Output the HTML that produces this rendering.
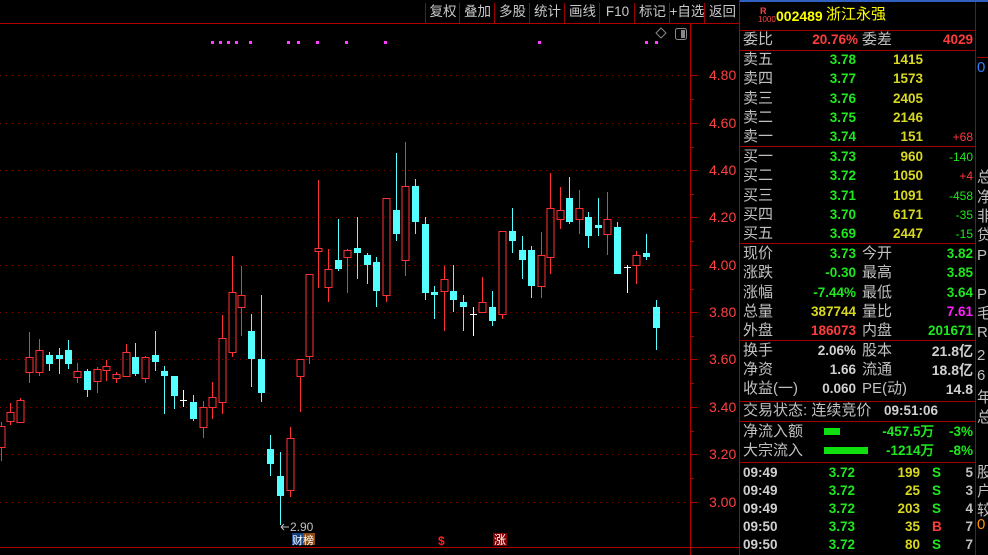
<!DOCTYPE html>
<html><head><meta charset="utf-8">
<style>
html,body{margin:0;padding:0;background:#000;width:988px;height:555px;overflow:hidden;position:relative;font-family:"Liberation Sans","Noto Sans CJK SC",sans-serif;}
.t{position:absolute;white-space:nowrap;font-size:15px;line-height:16px;}
.n{position:absolute;white-space:nowrap;font-size:13.5px;line-height:16px;font-weight:bold;font-family:"Liberation Sans",sans-serif;}
.r{text-align:right}
.g{color:#c0c0c0}.G{color:#1ee81e}.Y{color:#d8d820}.R{color:#ff3c3c}.M{color:#ff20ff}.W{color:#d0d0d0}
.hl{position:absolute;height:1px;background:#a00000;}
.vl{position:absolute;width:1px;background:#a00000;}
.btn{position:absolute;top:4px;font-size:13.5px;color:#c8c8c8;line-height:16px;text-align:center;}
</style></head><body>
<div class="hl" style="left:0;top:23px;width:740px;background:#b00000"></div>
<div class="btn" style="left:426px;width:34px">复权</div>
<div class="btn" style="left:460px;width:35px">叠加</div>
<div class="btn" style="left:495px;width:35px">多股</div>
<div class="btn" style="left:530px;width:35px">统计</div>
<div class="btn" style="left:565px;width:35px">画线</div>
<div class="btn" style="left:600px;width:35px">F10</div>
<div class="btn" style="left:635px;width:35px">标记</div>
<div class="btn" style="left:669px;width:36px">+自选</div>
<div class="btn" style="left:705px;width:35px">返回</div>
<div class="vl" style="left:425px;top:3px;height:20px;background:#900"></div>
<div class="vl" style="left:459px;top:3px;height:20px;background:#900"></div>
<div class="vl" style="left:494px;top:3px;height:20px;background:#900"></div>
<div class="vl" style="left:529px;top:3px;height:20px;background:#900"></div>
<div class="vl" style="left:564px;top:3px;height:20px;background:#900"></div>
<div class="vl" style="left:599px;top:3px;height:20px;background:#900"></div>
<div class="vl" style="left:634px;top:3px;height:20px;background:#900"></div>
<div class="vl" style="left:669px;top:3px;height:20px;background:#900"></div>
<div class="vl" style="left:704px;top:3px;height:20px;background:#900"></div>
<div class="vl" style="left:739px;top:0;height:555px;background:#b00000"></div>

<svg id="ch" width="740" height="555" style="position:absolute;left:0;top:0">
<g stroke="#800" stroke-dasharray="1,5" stroke-width="1" id="grid"></g>
<line x1="690.5" y1="24" x2="690.5" y2="555" stroke="#b00000"/>
<line x1="0" y1="547.5" x2="740" y2="547.5" stroke="#b00000"/>
<g id="ticks" stroke="#b00000"></g>
<g id="c"></g>
<g fill="#ff3cff" id="dots"></g>
<path d="M656 33 L661 28 L666 33 L661 38 Z" fill="none" stroke="#888" stroke-width="1"/>
<rect x="675.5" y="28.5" width="11" height="11" rx="2" fill="none" stroke="#888"/>
<rect x="681" y="30" width="4" height="8" fill="#888"/>
<g font-family="Liberation Sans,sans-serif" font-size="14" fill="#ff4040" id="ax"></g>
<path d="M281 527 H289 M281 527 l3 -3 M281 527 l3 3" stroke="#c0c0c0" fill="none"/>
<text x="290" y="531" font-size="12" fill="#c0c0c0" font-family="Liberation Sans,sans-serif">2.90</text>
<rect x="292" y="533" width="11" height="12" fill="#104080"/><rect x="303" y="533" width="12" height="12" fill="#8a4a10"/>
<text x="292" y="544" font-size="11" fill="#fff" font-family="Noto Sans CJK SC,sans-serif">财榜</text>
<text x="438" y="545" font-size="12" font-weight="bold" fill="#ff2020" font-family="Liberation Sans,sans-serif">$</text>
<rect x="493" y="533" width="14" height="13" fill="#800000"/>
<text x="494" y="544" font-size="12" fill="#fff" font-family="Noto Sans CJK SC,sans-serif">涨</text>
</svg>
<script>
var ns="http://www.w3.org/2000/svg";
function el(p,t,a){var e=document.createElementNS(ns,t);for(var k in a)e.setAttribute(k,a[k]);p.appendChild(e);return e;}
var grid=document.getElementById('grid'),ticks=document.getElementById('ticks'),ax=document.getElementById('ax');
var ys=[75,123,170,217,265,312,359,407,454,502],lab=["4.80","4.60","4.40","4.20","4.00","3.80","3.60","3.40","3.20","3.00"];
ys.forEach(function(y,i){el(grid,'line',{x1:0,y1:y+.5,x2:686,y2:y+.5});el(ticks,'line',{x1:690,y1:y+.5,x2:697,y2:y+.5});
 var t=el(ax,'text',{x:709,y:y+5});t.textContent=lab[i];
 if(i<9)el(ticks,'line',{x1:690,y1:y+24.5,x2:694,y2:y+24.5});});
var C=[
[1,'r',426,447,422,461],[10,'r',412,421,403,425],[20,'r',400,422,398,423],[29,'r',357,372,332,383],[39,'r',350,372,339,376],
[49,'c',355,364,352,371],[59,'c',355,359,348,374],[68,'c',350,364,340,369],[77,'r',371,377,363,383],[87,'c',371,390,369,397],
[97,'r',369,381,367,393],[106,'r',366,370,360,381],[116,'r',374,378,372,383],[126,'r',352,376,344,376],[135,'c',357,374,343,376],
[145,'r',357,378,356,383],[155,'c',355,362,331,371],[164,'c',371,376,366,414],[174,'c',376,396,376,409],[183,'w',400,400,390,407],
[193,'c',402,419,395,421],[203,'r',407,427,401,438],[212,'r',397,407,382,419],[222,'r',338,402,315,414],[232,'r',292,352,256,357],
[241,'r',295,307,266,336],[251,'c',331,359,314,387],[261,'c',359,393,295,402],[270,'c',449,464,435,476],[280,'c',476,496,452,525],
[290,'r',438,490,427,497],[300,'r',359,376,359,412],[309,'r',274,356,274,364],[318,'r',248,251,180,288],[328,'r',269,287,249,302],
[338,'c',260,269,219,271],[347,'r',250,257,249,293],[357,'c',248,253,217,279],[367,'c',255,265,253,284],[376,'c',262,291,257,307],
[386,'r',198,295,198,302],[396,'c',210,234,153,241],[405,'r',186,260,142,276],[415,'c',186,222,179,234],[425,'c',224,293,217,300],
[434,'c',292,295,286,319],[444,'r',279,291,266,331],[453,'c',291,300,265,312],[463,'c',302,307,295,331],[473,'w',314,314,307,336],
[482,'r',302,312,277,313],[492,'c',307,321,291,326],[502,'r',231,314,231,319],[512,'c',231,241,208,253],[522,'c',250,260,236,279],
[531,'c',250,286,246,298],[541,'r',255,286,232,298],[550,'r',208,257,173,274],[560,'r',210,219,187,229],[569,'c',198,222,177,224],
[579,'r',208,219,190,234],[588,'c',217,236,212,248],[598,'c',225,228,198,236],[607,'r',219,234,192,255],[617,'c',227,274,222,274],
[627,'w',267,267,265,293],[636,'r',255,265,251,284],[646,'c',253,257,234,260],[656,'c',307,328,300,350]];
var g=document.getElementById('c');
C.forEach(function(d){var x=d[0],col=d[1]=='r'?'#ff3232':d[1]=='c'?'#54ffff':'#ffffff';
 if(d[1]=='r'){el(g,'line',{x1:x+.5,y1:d[4],x2:x+.5,y2:d[2],stroke:col});el(g,'line',{x1:x+.5,y1:d[3],x2:x+.5,y2:d[5],stroke:col});
  el(g,'rect',{x:x-3,y:d[2]+.5,width:7,height:Math.max(d[3]-d[2],1),fill:'none',stroke:col});}
 else if(d[1]=='c'){el(g,'line',{x1:x+.5,y1:d[4],x2:x+.5,y2:d[5],stroke:col});el(g,'rect',{x:x-3,y:d[2],width:7,height:Math.max(d[3]-d[2],2),fill:col});}
 else{el(g,'line',{x1:x+.5,y1:d[4],x2:x+.5,y2:d[5],stroke:col});el(g,'line',{x1:x-3,y1:d[2]+.5,x2:x+4,y2:d[2]+.5,stroke:col});}
});
var dots=document.getElementById('dots');
[212,220,228,236,250,288,298,317,346,385,539,646,656].forEach(function(x){el(dots,'rect',{x:x-1,y:41,width:3,height:3});});
</script>

<div style="position:absolute;left:740px;top:0;width:248px;height:2px;background:#3060c0"></div>
<div class="hl" style="left:740px;top:30px;width:235px"></div>
<div class="hl" style="left:740px;top:50px;width:235px"></div>
<div class="hl" style="left:740px;top:146px;width:235px"></div>
<div class="hl" style="left:740px;top:243px;width:235px"></div>
<div class="hl" style="left:740px;top:340px;width:235px"></div>
<div class="hl" style="left:740px;top:401px;width:235px"></div>
<div class="hl" style="left:740px;top:421px;width:235px"></div>
<div class="hl" style="left:740px;top:462px;width:235px"></div>
<div class="vl" style="left:975px;top:2px;height:553px"></div>
<div class="hl" style="left:977px;top:57px;width:11px"></div>

<div style="position:absolute;left:760px;top:7px;color:#ff4040;font-size:9px;line-height:9px;font-family:'Liberation Sans',sans-serif;font-weight:bold">R</div>
<div style="position:absolute;left:758px;top:15px;color:#ff4040;font-size:8px;line-height:9px;font-family:'Liberation Sans',sans-serif">1000</div>
<div class="n" style="left:776px;top:8px;color:#ffff00;font-size:14px">002489</div>
<div class="t" style="left:826px;top:7px;color:#ffff00;font-size:15px">浙江永强</div>

<div class="t g" style="left:743px;top:32px">委比</div>
<div class="n R r" style="left:790px;top:32px;width:68px">20.76%</div>
<div class="t g" style="left:862px;top:32px">委差</div>
<div class="n R r" style="left:900px;top:32px;width:73px">4029</div>

<div id="rp"></div>
<script>
var rp=document.getElementById('rp'),h='';
function T(x,y,cls,txt,w,num){h+='<div class="'+(num?'n':'t')+' '+cls+(w?' r':'')+'" style="left:'+x+'px;top:'+y+'px;'+(w?'width:'+w+'px':'')+'">'+txt+'</div>';}
var sell=[['卖五','3.78','1415',''],['卖四','3.77','1573',''],['卖三','3.76','2405',''],['卖二','3.75','2146',''],['卖一','3.74','151','+68']];
var buy=[['买一','3.73','960','-140'],['买二','3.72','1050','+4'],['买三','3.71','1091','-458'],['买四','3.70','6171','-35'],['买五','3.69','2447','-15']];
sell.forEach(function(r,i){var y=52+i*19.3;T(743,y,'g',r[0]);T(800,y,'G',r[1],56,1);T(860,y,'Y',r[2],63,1);if(r[3])h+='<div class="t R r" style="left:920px;top:'+y+'px;width:53px;font-size:12px">'+r[3]+'</div>';});
buy.forEach(function(r,i){var y=149+i*19.3;T(743,y,'g',r[0]);T(800,y,'G',r[1],56,1);T(860,y,'Y',r[2],63,1);h+='<div class="t '+(r[3][0]=='+'?'R':'G')+' r" style="left:920px;top:'+y+'px;width:53px;font-size:12px">'+r[3]+'</div>';});
var q=[['现价','3.73','G','今开','3.82','G'],['涨跌','-0.30','G','最高','3.85','G'],['涨幅','-7.44%','G','最低','3.64','G'],['总量','387744','Y','量比','7.61','M'],['外盘','186073','R','内盘','201671','G']];
q.forEach(function(r,i){var y=246+i*19.3;T(743,y,'g',r[0]);T(790,y,r[2],r[1],66,1);T(862,y,'g',r[3]);T(900,y,r[5],r[4],73,1);});
var f=[['换手','2.06%','股本','21.8亿'],['净资','1.66','流通','18.8亿'],['收益(一)','0.060','PE(动)','14.8']];
f.forEach(function(r,i){var y=343+i*19;T(743,y,'g',r[0]);T(790,y,'W',r[1],66,1);T(862,y,'g',r[2]);
 h+='<div class="t W r" style="left:900px;top:'+y+'px;width:73px;font-weight:bold;font-size:14px">'+r[3]+'</div>';});
T(743,403,'g','交易状态: 连续竞价');T(884,403,'W','09:51:06',0,1);
T(743,424,'g','净流入额');T(743,443,'g','大宗流入');
h+='<div style="position:absolute;left:824px;top:428px;width:16px;height:7px;background:#10e010"></div>';
h+='<div style="position:absolute;left:824px;top:447px;width:44px;height:7px;background:#10e010"></div>';
T(860,424,'G','-457.5万',74,1);T(860,443,'G','-1214万',74,1);T(930,424,'G','-3%',43,1);T(930,443,'G','-8%',43,1);
var tr=[['09:49','3.72','199','S','5'],['09:49','3.72','25','S','3'],['09:49','3.72','203','S','4'],['09:50','3.73','35','B','7'],['09:50','3.72','80','S','7']];
tr.forEach(function(r,i){var y=465+i*18;T(743,y,'W',r[0],0,1);T(800,y,'G',r[1],55,1);T(860,y,'Y',r[2],60,1);T(932,y,r[3]=='S'?'G':'R',r[3],0,1);T(960,y,'g',r[4],13,1);});
var ex=[[170,'总'],[190,'净'],[209,'非'],[228,'贷'],[248,'P'],[287,'P'],[306,'毛'],[325,'R'],[348,'2'],[368,'6'],[390,'年'],[410,'总'],[465,'股'],[484,'户'],[503,'较']];
ex.forEach(function(e){T(977,e[0],'g',e[1]);});
T(977,517,'','<span style="color:#ff9000">0</span>');
T(977,60,'','<span style="color:#3080ff">0</span>');
rp.innerHTML=h;
</script>
</body></html>
